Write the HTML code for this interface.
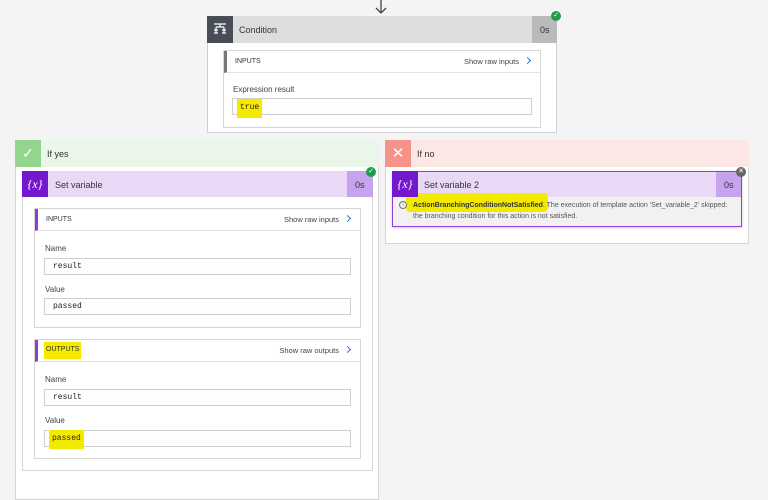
<!DOCTYPE html>
<html><head><style>
*{box-sizing:border-box;margin:0;padding:0}
body{width:768px;height:483px;background:#f4f4f4;position:relative;overflow:hidden;font-family:"Segoe UI","Liberation Sans",sans-serif;font-size:8px;color:#333}
.a{position:absolute}
.mono{font-family:"Liberation Mono",monospace;font-size:8px;color:#222}
.box{background:#fff;border:1px solid #d0d0d0}
.inp{position:absolute;background:#fdfdfb;border:1px solid #cfcfcf;height:17px;padding:3px 0 0 8px}
.lbl{position:absolute;font-size:8px;color:#444}
.sec{position:absolute;background:#fff;border:1px solid #d5d5d5}
.sh{position:absolute;left:0;right:0;top:0;height:22px;border-bottom:1px solid #e2e2e2;border-left:3px solid #8b3fd6}
.sh .t{position:absolute;left:8px;top:7px;font-size:7px;color:#333;line-height:8px}
.sh .r{position:absolute;right:10px;top:4px;font-size:7.5px;color:#444;line-height:14px}
.chev{display:inline-block;width:5px;height:5px;border-top:1.5px solid #2b6fd6;border-right:1.5px solid #2b6fd6;transform:rotate(45deg);margin-left:6px;position:relative;top:-1px}
.hl{background:#f3ea00}
</style></head><body>
<svg class="a" style="left:374px;top:0" width="14" height="16"><path d="M7 0V13M2 8L7 13L12 8" stroke="#444" stroke-width="1.3" fill="none"/></svg>

<div class="a box" style="left:207px;top:16px;width:350px;height:117px"></div>
<div class="a" style="left:207px;top:16px;width:350px;height:27px;background:#dcdddf"></div>
<div class="a" style="left:207px;top:16px;width:26px;height:27px;background:#484e55"></div>
<svg class="a" style="left:212px;top:21px" width="16" height="16"><g stroke="#fff" stroke-width="1.2" fill="none"><path d="M2 3H14M8 3V6M4 6H12M4 6V12M12 6V12M2 9H6M10 9H14M2 12H6M10 12H14"/></g></svg>
<div class="a" style="left:239px;top:25px;font-size:9px;color:#333">Condition</div>
<div class="a" style="left:532px;top:16px;width:25px;height:27px;background:#b9babc;font-size:9px;padding:9px 0 0 8px">0s</div>
<div class="a" style="left:551px;top:11px;width:10px;height:10px;border-radius:50%;background:#1f9d4d;color:#fff;font-size:7px;text-align:center;line-height:10px">✓</div>
<div class="sec" style="left:223px;top:50px;width:318px;height:78px">
 <div class="sh" style="border-left-color:#777"><span class="t">INPUTS</span><span class="r">Show raw inputs<span class="chev"></span></span></div>
</div>
<div class="lbl" style="left:233px;top:85px">Expression result</div>
<div class="inp" style="left:232px;top:98px;width:300px;padding-left:4px"><span class="mono hl" style="padding:4px 3px 6px">true</span></div>

<div class="a" style="left:15px;top:140px;width:364px;height:360px;background:#fff;border:1px solid #d5d5d5"></div>
<div class="a" style="left:15px;top:140px;width:364px;height:27px;background:#eaf6ea"></div>
<div class="a" style="left:15px;top:140px;width:26px;height:27px;background:#92d58f;color:#fff;font-size:14px;text-align:center;line-height:27px">✓</div>
<div class="a" style="left:47px;top:149px;font-size:9px">If yes</div>

<div class="a" style="left:22px;top:171px;width:351px;height:300px;background:#fff;border:1px solid #d5d5d5"></div>
<div class="a" style="left:22px;top:171px;width:351px;height:26px;background:#e9d9f6"></div>
<div class="a" style="left:22px;top:171px;width:26px;height:26px;background:#7418cd;color:#fff;font-family:'Liberation Serif',serif;font-style:italic;font-size:12px;text-align:center;line-height:26px">{x}</div>
<div class="a" style="left:55px;top:180px;font-size:9px">Set variable</div>
<div class="a" style="left:347px;top:171px;width:26px;height:26px;background:#c7a3ee;font-size:9px;padding:9px 0 0 8px">0s</div>
<div class="a" style="left:366px;top:167px;width:10px;height:10px;border-radius:50%;background:#1f9d4d;color:#fff;font-size:7px;text-align:center;line-height:10px">✓</div>

<div class="sec" style="left:34px;top:208px;width:327px;height:120px">
 <div class="sh"><span class="t">INPUTS</span><span class="r">Show raw inputs<span class="chev"></span></span></div>
</div>
<div class="lbl" style="left:45px;top:244px">Name</div>
<div class="inp mono" style="left:44px;top:258px;width:307px">result</div>
<div class="lbl" style="left:45px;top:285px">Value</div>
<div class="inp mono" style="left:44px;top:298px;width:307px">passed</div>

<div class="sec" style="left:34px;top:339px;width:327px;height:120px">
 <div class="sh"><span class="t hl" style="padding:4px 2px 5px;left:6px;top:2px">OUTPUTS</span><span class="r">Show raw outputs<span class="chev"></span></span></div>
</div>
<div class="lbl" style="left:45px;top:375px">Name</div>
<div class="inp mono" style="left:44px;top:389px;width:307px">result</div>
<div class="lbl" style="left:45px;top:416px">Value</div>
<div class="inp mono" style="left:44px;top:430px;width:307px;padding-left:4px"><span class="hl" style="padding:4px 3px 6px">passed</span></div>

<div class="a" style="left:385px;top:140px;width:364px;height:104px;background:#fff;border:1px solid #d5d5d5"></div>
<div class="a" style="left:385px;top:140px;width:364px;height:27px;background:#fde6e6"></div>
<div class="a" style="left:385px;top:140px;width:26px;height:27px;background:#f7928b;color:#fff;font-size:15px;text-align:center;line-height:27px">✕</div>
<div class="a" style="left:417px;top:149px;font-size:9px">If no</div>

<div class="a" style="left:392px;top:171px;width:350px;height:56px;background:#f2f1f1;border:1px solid #8b3fd6;box-shadow:0 1px 3px rgba(0,0,0,.2)"></div>
<div class="a" style="left:393px;top:172px;width:348px;height:25px;background:#e9d9f6"></div>
<div class="a hl" style="left:406px;top:193px;width:142px;height:19px;border-radius:4px"></div>
<div class="a" style="left:392px;top:171px;width:26px;height:26px;background:#7418cd;color:#fff;font-family:'Liberation Serif',serif;font-style:italic;font-size:12px;text-align:center;line-height:26px">{x}</div>
<div class="a" style="left:424px;top:180px;font-size:9px">Set variable 2</div>
<div class="a" style="left:716px;top:172px;width:25px;height:25px;background:#c7a3ee;font-size:9px;padding:8px 0 0 8px">0s</div>
<div class="a" style="left:736px;top:167px;width:10px;height:10px;border-radius:50%;background:#666;color:#fff;font-size:7px;text-align:center;line-height:10px">✕</div>
<div class="a" style="left:399px;top:201px;width:8px;height:8px;border-radius:50%;border:1px solid #777;font-size:5px;text-align:center;line-height:6px;color:#777">i</div>
<div class="a" style="left:413px;top:200px;font-size:7px;color:#555;width:320px;line-height:11px"><b style="color:#333;font-weight:bold">ActionBranchingConditionNotSatisfied</b>. The execution of template action 'Set_variable_2' skipped: the branching condition for this action is not satisfied.</div>
</body></html>
